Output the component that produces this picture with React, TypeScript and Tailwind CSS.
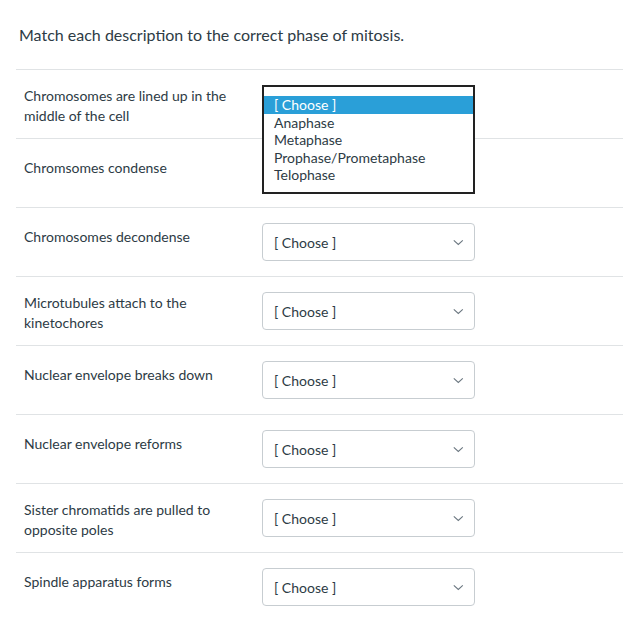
const options = ["Anaphase", "Metaphase", "Prophase/Prometaphase", "Telophase"];

const rows: { label: string; twoLine?: boolean; open?: boolean }[] = [
  { label: "Chromosomes are lined up in the middle of the cell", twoLine: true, open: true },
  { label: "Chromsomes condense" },
  { label: "Chromosomes decondense" },
  { label: "Microtubules attach to the kinetochores", twoLine: true },
  { label: "Nuclear envelope breaks down" },
  { label: "Nuclear envelope reforms" },
  { label: "Sister chromatids are pulled to opposite poles", twoLine: true },
  { label: "Spindle apparatus forms" },
];

function Chevron() {
  return (
    <svg width="11" height="7" viewBox="0 0 11 7" fill="none" className="text-[#6b7780]">
      <path d="M0.8 1.3 L5.3 5.5 L9.8 1.3" stroke="currentColor" strokeWidth="1.1" />
    </svg>
  );
}

function Select({ open }: { open?: boolean }) {
  return (
    <div className="relative mt-[15px]">
      <div className="flex h-[38px] w-[213px] items-center justify-between rounded-[4px] border border-[#c7cdd1] bg-white pl-[11px] pr-[10px] text-[14px] text-[#2d3b45]">
        <span>[ Choose ]</span>
        <Chevron />
      </div>
      {open && (
        <div className="absolute left-0 top-0 z-10 w-[213px] border-2 border-[#222] bg-white pt-[9px] pb-[8px] text-[14px] leading-[17.6px] text-[#2d3b45]">
          <div className="bg-[#2a9fd8] px-[10px] text-white">[ Choose ]</div>
          {options.map((o) => (
            <div key={o} className="px-[10px]">
              {o}
            </div>
          ))}
        </div>
      )}
    </div>
  );
}

export default function App() {
  return (
    <div className="min-h-[622px] bg-white font-['Lato','Noto_Sans',sans-serif] text-[#2d3b45]">
      <div className="pl-4 pr-[3px]">
        <h1 className="pl-[3px] pt-[24px] pb-[23px] text-[16px] leading-[22px] font-normal">
          Match each description to the correct phase of mitosis.
        </h1>
        {rows.map((r) => (
          <div key={r.label} className="flex h-[69px] border-t border-[#e0e3e5]">
            <div
              className={`w-[246px] pl-[8px] pr-[16px] text-[14px] leading-[20px] ${
                r.twoLine ? "pt-[16px]" : "pt-[19px]"
              }`}
            >
              {r.label}
            </div>
            <Select open={r.open} />
          </div>
        ))}
      </div>
    </div>
  );
}
